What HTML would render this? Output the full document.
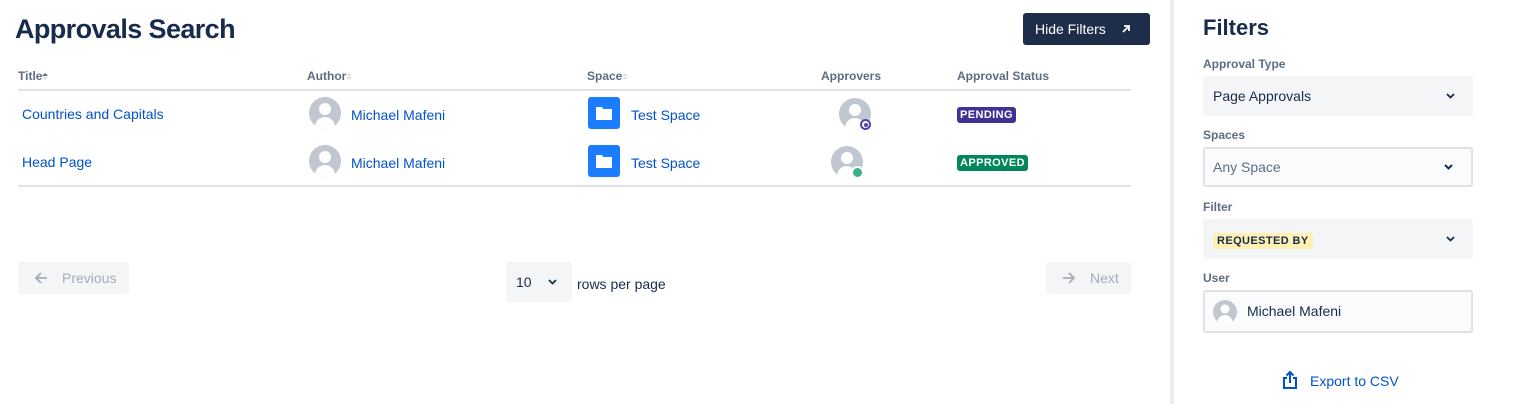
<!DOCTYPE html>
<html><head><meta charset="utf-8"><style>
*{box-sizing:border-box;margin:0;padding:0}
body{width:1528px;height:404px;background:#fff;font-family:"Liberation Sans",Arial,sans-serif;position:relative;overflow:hidden;color:#172b4d}
.a{position:absolute}
h1{position:absolute;left:15px;top:14px;font-size:27px;font-weight:bold;color:#172b4d;letter-spacing:-0.6px}
.btn{left:1023px;top:13px;width:127px;height:32px;background:#1e2e4a;color:#fff;border-radius:3px;font-size:14px;line-height:32px;padding-left:12px}
.th{top:69px;font-size:12px;font-weight:bold;color:#5e6c84}
.line{left:18px;width:1113px;height:2px;background:#dfe1e6}
.lnk{color:#0052cc;font-size:14px}
.av{width:32px;height:32px;border-radius:50%;background:#c1c7d0;overflow:hidden}
.av::before{content:"";position:absolute;left:10px;top:6px;width:12px;height:12px;border-radius:50%;background:#fff}
.av::after{content:"";position:absolute;left:6px;top:20px;width:20px;height:14px;border-radius:10px 10px 0 0;background:#fff}
.sp{width:32px;height:32px;background:#1c7cff;border-radius:3px}
.lz{font-size:11px;font-weight:bold;color:#fff;border-radius:3px;padding:1px 3px;line-height:14px;letter-spacing:0.4px}
.pg{background:#f4f5f7;border-radius:3px;height:32px;font-size:14px;color:#a5adba;line-height:32px}
.side{left:1170px;top:0;width:4px;height:404px;background:#ebecf0}
.lab{left:1203px;font-size:12px;font-weight:bold;color:#5e6c84}
.sel{left:1203px;width:270px;height:40px;background:#f4f5f7;border-radius:3px;font-size:14px;line-height:40px;padding-left:10px}
.sel.b{border:2px solid #dfe1e6;background:#fafbfc;padding-left:8px;line-height:36px}
.chev{position:absolute;right:18px;top:50%;margin-top:-3px}
</style></head><body>
<h1>Approvals Search</h1>
<div class="a btn">Hide Filters <svg style="position:absolute;left:98px;top:11px" width="10" height="10" viewBox="0 0 10 10"><path d="M2 8L8 2M3 2h5v5" fill="none" stroke="#fff" stroke-width="1.8"/></svg></div>
<div class="a th" style="left:18px">Title<svg width="6" height="8" viewBox="0 0 6 8"><path d="M0 4L3 1L6 4z" fill="#5e6c84"/><path d="M0 5L3 8L6 5z" fill="#dfe1e6"/></svg></div>
<div class="a th" style="left:307px">Author<svg width="6" height="8" viewBox="0 0 6 8"><path d="M0 4L3 1L6 4zM0 5L3 8L6 5z" fill="#dfe1e6"/></svg></div>
<div class="a th" style="left:587px">Space<svg width="6" height="8" viewBox="0 0 6 8"><path d="M0 4L3 1L6 4zM0 5L3 8L6 5z" fill="#dfe1e6"/></svg></div>
<div class="a th" style="left:821px">Approvers</div>
<div class="a th" style="left:957px">Approval Status</div>
<div class="a line" style="top:89px"></div>
<div class="a line" style="top:185px"></div>

<div class="a lnk" style="left:22px;top:106px">Countries and Capitals</div>
<div class="a av" style="left:309px;top:97px"></div>
<div class="a lnk" style="left:351px;top:107px">Michael Mafeni</div>
<div class="a sp" style="left:588px;top:97px"><svg style="position:absolute;left:8px;top:9px" width="16" height="14" viewBox="0 0 16 14"><path d="M0 1h6l1 2h9v11H0z" fill="#fff"/></svg></div>
<div class="a lnk" style="left:631px;top:107px">Test Space</div>
<div class="a av" style="left:839px;top:98px"></div>
<div class="a" style="left:860px;top:119px;width:11px;height:11px;border-radius:50%;background:#fff;border:2px solid #5243aa"><div style="margin:1.5px;width:4px;height:4px;border-radius:50%;background:#5243aa"></div></div>
<div class="a lz" style="left:957px;top:107px;background:#403294">PENDING</div>

<div class="a lnk" style="left:22px;top:154px">Head Page</div>
<div class="a av" style="left:309px;top:145px"></div>
<div class="a lnk" style="left:351px;top:155px">Michael Mafeni</div>
<div class="a sp" style="left:588px;top:145px"><svg style="position:absolute;left:8px;top:9px" width="16" height="14" viewBox="0 0 16 14"><path d="M0 1h6l1 2h9v11H0z" fill="#fff"/></svg></div>
<div class="a lnk" style="left:631px;top:155px">Test Space</div>
<div class="a av" style="left:831px;top:146px"></div>
<div class="a" style="left:851px;top:166px;width:13px;height:13px;border-radius:50%;background:#36b37e;border:2px solid #fff"></div>
<div class="a lz" style="left:957px;top:155px;background:#00875a">APPROVED</div>

<div class="a pg" style="left:18px;top:262px;width:111px;padding-left:44px"><svg style="position:absolute;left:16px;top:9px" width="14" height="14" viewBox="0 0 14 14"><path d="M13 7H2M7 2L2 7l5 5" fill="none" stroke="#a5adba" stroke-width="1.8"/></svg>Previous</div>
<div class="a pg" style="left:506px;top:262px;width:66px;height:40px;line-height:40px;padding-left:10px;color:#172b4d">10<svg style="position:absolute;left:42px;top:17px" width="9" height="6" viewBox="0 0 9 6"><path d="M1 1l3.5 3.5L8 1" fill="none" stroke="#172b4d" stroke-width="1.8"/></svg></div>
<div class="a" style="left:577px;top:276px;font-size:14px;color:#172b4d">rows per page</div>
<div class="a pg" style="left:1046px;top:262px;width:85px;padding-left:44px"><svg style="position:absolute;left:16px;top:9px" width="14" height="14" viewBox="0 0 14 14"><path d="M1 7h11M7 2l5 5-5 5" fill="none" stroke="#a5adba" stroke-width="1.8"/></svg>Next</div>

<div class="a side"></div>
<div class="a" style="left:1203px;top:15px;font-size:22px;font-weight:bold">Filters</div>
<div class="a lab" style="top:57px">Approval Type</div>
<div class="a sel" style="top:76px">Page Approvals<svg class="chev" width="9" height="6" viewBox="0 0 9 6"><path d="M1 1l3.5 3.5L8 1" fill="none" stroke="#172b4d" stroke-width="1.8"/></svg></div>
<div class="a lab" style="top:128px">Spaces</div>
<div class="a sel b" style="top:147px;color:#5e6c84">Any Space<svg class="chev" width="9" height="6" viewBox="0 0 9 6"><path d="M1 1l3.5 3.5L8 1" fill="none" stroke="#172b4d" stroke-width="2"/></svg></div>
<div class="a lab" style="top:200px">Filter</div>
<div class="a sel" style="top:219px"><span style="background:#fff0b3;font-size:11px;font-weight:bold;padding:2px 4px;border-radius:3px;letter-spacing:0.4px">REQUESTED BY</span><svg class="chev" width="9" height="6" viewBox="0 0 9 6"><path d="M1 1l3.5 3.5L8 1" fill="none" stroke="#172b4d" stroke-width="1.8"/></svg></div>
<div class="a lab" style="top:271px">User</div>
<div class="a sel b" style="top:290px;height:43px;line-height:39px;padding-left:42px">Michael Mafeni</div>
<div class="a av" style="left:1213px;top:300px;transform:scale(.75);transform-origin:0 0"></div>
<svg class="a" style="left:1282px;top:371px" width="16" height="18" viewBox="0 0 16 18"><path d="M5 7H2v10h12V7h-3M8 12V1M4.5 4.5L8 1l3.5 3.5" fill="none" stroke="#0052cc" stroke-width="2"/></svg>
<div class="a lnk" style="left:1310px;top:373px">Export to CSV</div>
</body></html>
